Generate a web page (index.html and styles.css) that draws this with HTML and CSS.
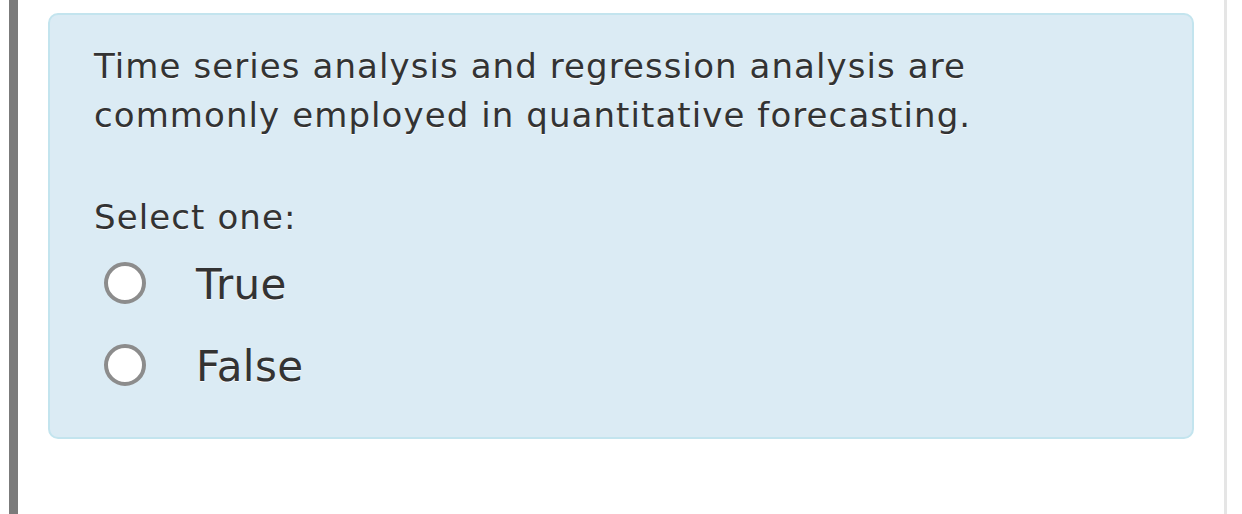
FILE: index.html
```html
<!DOCTYPE html>
<html lang="en">
<head>
<meta charset="utf-8">
<title>Question</title>
<link rel="stylesheet" href="styles.css">
</head>
<body>
<div class="page">
  <div class="frame">
    <div class="formulation">
      <p class="qtext">Time series analysis and regression analysis are commonly employed in quantitative forecasting.</p>
      <div class="prompt">Select one:</div>
      <div class="answer">
        <label class="option"><span class="radio"></span><span class="label">True</span></label>
        <label class="option"><span class="radio"></span><span class="label">False</span></label>
      </div>
    </div>
  </div>
</div>
</body>
</html>
```
FILE: styles.css
```css
html, body {
  margin: 0;
  padding: 0;
  background: #ffffff;
}
body {
  font-family: "DejaVu Sans", Verdana, sans-serif;
  color: #333333;
}
.page {
  display: flex;
  height: 514px;
  padding-left: 9px;
  box-sizing: border-box;
}
.frame {
  width: 1146px;
  border-left: 9px solid #7b7b7b;
  border-right: 3px solid #e5e5e5;
  padding: 13px 30px 0 30px;
  box-sizing: content-box;
}
.formulation {
  background: #dbebf4;
  border: 2px solid #c3e4ee;
  border-radius: 10px;
  padding: 27px 44px 31px 44px;
  text-shadow: 0 1px 0 rgba(255, 255, 255, 0.85);
}
.qtext {
  margin: 0;
  font-size: 34px;
  line-height: 48.6px;
  letter-spacing: 1.08px;
  width: 960px;
}
.prompt {
  margin-top: 54px;
  font-size: 34px;
  line-height: 48.6px;
  letter-spacing: 1.1px;
}
.answer {
  display: flex;
  flex-direction: column;
}
.option {
  display: flex;
  align-items: center;
  height: 82px;
  padding-left: 10px;
}
.radio {
  width: 34px;
  height: 34px;
  border: 4px solid #8c8c8c;
  border-radius: 50%;
  background: #ffffff;
  flex: none;
}
.label {
  margin-left: 50px;
  font-size: 42px;
  letter-spacing: 0.4px;
  position: relative;
  top: 2px;
}
```
